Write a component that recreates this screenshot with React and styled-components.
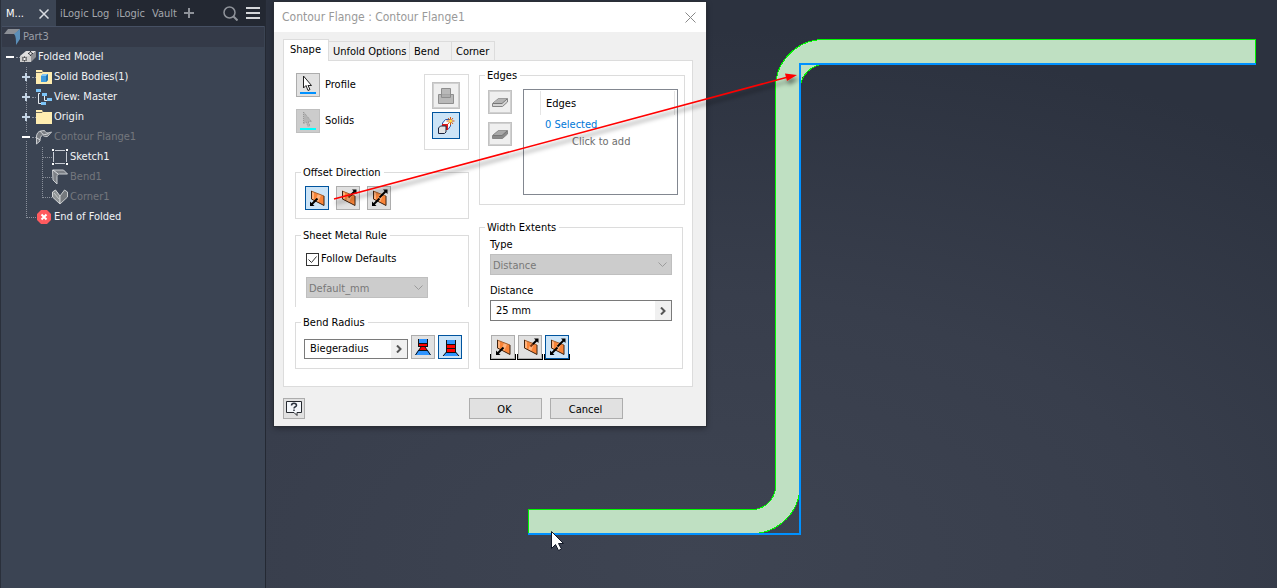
import React from "react";
import styled, { createGlobalStyle } from "styled-components";

const GlobalStyle = createGlobalStyle`
    * { box-sizing: border-box; }
    body { margin: 0; background-color: #2f3542; }
    body, button, input, select {
        font-family: Tahoma, "DejaVu Sans Condensed", "DejaVu Sans", sans-serif;
        font-size: 11px;
        line-height: 16px;
    }
`

const Page = styled.div`
    display: flex;
    position: relative;
    min-height: 100vh;
    overflow: hidden;
`

/* ---------- browser panel ---------- */

const Sidebar = styled.aside`
    width: 266px;
    flex: none;
    padding-left: 1px;
    border-right: 1px solid #242933;
    background-color: #3b4453;
    box-shadow: inset 1px 0 0 #2a303b;
`

const TabBar = styled.div`
    display: flex;
    align-items: center;
    height: 26px;
    padding-right: 5px;
    background-color: #232832;
`

const PanelTab = styled.button`
    display: flex;
    align-items: center;
    justify-content: space-between;
    align-self: stretch;
    flex: none;
    width: ${props => props.$active ? "55px" : "auto"};
    padding: ${props => props.$active ? "1px 7px 0 5px" : "1px 3px 0 4px"};
    border: 0;
    background-color: ${props => props.$active ? "#3b4453" : "transparent"};
    color: ${props => props.$active ? "#ffffff" : "#a3a7ad"};
`

const BarButton = styled.button`
    display: flex;
    padding: 0;
    margin-left: ${props => props.$left};
    border: 0;
    background: none;
`

const RootRow = styled.div`
    display: flex;
    align-items: center;
    gap: 1px;
    height: 21px;
    margin: 0 1px;
    padding-left: 2px;
    border-top: 1px solid #465063;
    background-color: #343a48;
    color: #9a9ea6;
`

const Tree = styled.ul`
    margin: 0;
    padding: 0;
    list-style: none;
`

const Branch = styled(Tree)`
    position: relative;
    padding-left: 16px;
    &::before {
        content: "";
        position: absolute;
        top: 0;
        bottom: 9px;
        left: 25px;
        border-left: 1px dotted #8a909b;
    }
`

const TreeRow = styled.div`
    display: flex;
    align-items: center;
    position: relative;
    height: 20px;
    padding-left: 5px;
    color: ${props => props.$dim ? "#74777d" : "#f2f3f5"};
`

const Toggle = styled.span`
    display: flex;
    width: 8px;
    margin-right: 6px;
    background-color: ${props => props.$blank ? "transparent" : "#3b4453"};
`

const Leader = styled.span`
    position: absolute;
    left: ${props => props.$long ? "10px" : "15px"};
    width: ${props => props.$long ? "9px" : "4px"};
    border-top: 1px dotted #8a909b;
`

const RowIcon = styled.svg`
    position: relative;
    flex: none;
    width: 16px;
    height: 16px;
    margin-right: 2px;
`

/* ---------- dialog ---------- */

const Viewport = styled.main`
    position: relative;
    flex: 1;
    background: radial-gradient(ellipse 95% 90% at 42% 95%, #3e4452 0%, #383e4c 50%, #2c323f 100%);
`

const Drawing = styled.svg`
    position: absolute;
    top: 0;
    left: 0;
    width: 100%;
    height: 100%;
`

const Dialog = styled.section`
    position: absolute;
    top: 2px;
    left: 8px;
    width: 432px;
    background-color: #f0f0f0;
    color: #000000;
    box-shadow: 0 0 0 1px #2a2e36, 0 2px 6px rgba(0, 0, 0, 0.4);
`

const TitleBar = styled.header`
    display: flex;
    align-items: center;
    justify-content: space-between;
    height: 30px;
    padding: 0 10px 0 8px;
    background-color: #ffffff;
`

const Title = styled.h1`
    margin: 0;
    color: #999999;
    font-size: 12px;
    font-weight: 400;
`

const CloseButton = styled.button`
    display: flex;
    padding: 0;
    border: 0;
    background: none;
`

const DialogBody = styled.div`
    padding: 7px 13px 7px 9px;
`

const Tabs = styled.div`
    display: flex;
    align-items: flex-end;
`

const Tab = styled.button`
    position: relative;
    width: ${props => props.$width};
    height: ${props => props.$active ? "22px" : "19px"};
    margin-bottom: ${props => props.$active ? "-1px" : "0"};
    padding: ${props => props.$active ? "0 0 1px 6px" : "1px 0 0 4px"};
    border: 1px solid #dcdcdc;
    border-bottom: 0;
    border-left-width: ${props => props.$active ? "1px" : "0"};
    background-color: ${props => props.$active ? "#ffffff" : "#f0f0f0"};
    text-align: left;
    white-space: nowrap;
    z-index: ${props => props.$active ? 1 : 0};
`

const Sheet = styled.div`
    display: flex;
    gap: 10px;
    padding: 0 7px 17px 11px;
    border: 1px solid #dcdcdc;
    background-color: #ffffff;
`

const LeftColumn = styled.div`
    width: 174px;
    padding-top: 12px;
`

const RightColumn = styled.div`
    flex: 1;
    padding-top: 7px;
`

const Group = styled.fieldset`
    min-width: 0;
    height: ${props => props.$height};
    margin: ${props => props.$top} ${props => props.$inset || "0"} 0 0;
    padding: ${props => props.$pad};
    border: 1px solid #dcdcdc;
    border-bottom-width: ${props => props.$open ? "0" : "1px"};
`

const Legend = styled.legend`
    height: 14px;
    margin-left: ${props => props.$pull || "0"};
    padding: 0 3px 0 2px;
`

const Row = styled.div`
    display: flex;
    align-items: ${props => props.$end ? "flex-end" : "flex-start"};
    gap: ${props => props.$gap || "0"};
    justify-content: ${props => props.$spread ? "space-between" : "flex-start"};
`

const Stack = styled.div`
    display: flex;
    flex-direction: column;
    gap: ${props => props.$gap || "0"};
    padding-top: ${props => props.$top || "0"};
`

const PickLabel = styled.label`
    display: flex;
    align-items: center;
    gap: 5px;
    padding-left: 1px;
`

const ModeBox = styled.div`
    display: flex;
    flex-direction: column;
    gap: 3px;
    width: 45px;
    height: 76px;
    margin-top: 1px;
    padding: 7px;
    border: 1px solid #dcdcdc;
`

const faces = {
    normal: ["#adadad", "#e1e1e1"],
    on: ["#00549e", "#cce4f7"],
    faded: ["#bfbfbf", "#cccccc"],
    flat: ["#c2c2c2", "#efefef"],
}

const IconButton = styled.button`
    display: flex;
    align-items: center;
    justify-content: center;
    flex: none;
    width: ${props => props.$wide ? "28px" : "24px"};
    height: ${props => props.$wide ? "27px" : "24px"};
    padding: 0;
    border: 1px solid ${props => faces[props.$face || "normal"][0]};
    background-color: ${props => faces[props.$face || "normal"][1]};
    box-shadow: ${props => props.$face === "flat" ? "inset 0 0 0 1px #d0d0d0" : "none"};
`

const SideButton = styled(IconButton)`
    position: relative;
    &::after {
        content: "";
        position: absolute;
        right: -2px;
        bottom: -2px;
        left: -2px;
        height: 5px;
        border: 1px solid #000000;
        border-top: 0;
    }
`

const SideRow = styled(Row)`
    margin-top: 14px;
    padding-left: 1px;
`

const CheckLabel = styled.label`
    display: flex;
    align-items: center;
    gap: 2px;
`

const CheckBox = styled.input`
    appearance: none;
    width: 13px;
    height: 13px;
    margin: 0;
    border: 1px solid #333333;
    background: #ffffff;
    &:checked {
        background: #ffffff url("data:image/svg+xml,%3Csvg xmlns='http://www.w3.org/2000/svg' viewBox='0 0 11 11'%3E%3Cpath d='M1.5 5.5l3 3 5-6' fill='none' stroke='%23333'/%3E%3C/svg%3E");
    }
`

const Select = styled.select`
    appearance: none;
    display: block;
    width: ${props => props.$width || "100%"};
    height: 21px;
    padding: 2px 20px 0 2px;
    border: 1px solid #bfbfbf;
    border-radius: 0;
    background: #cccccc url("data:image/svg+xml,%3Csvg xmlns='http://www.w3.org/2000/svg' viewBox='0 0 9 6'%3E%3Cpath d='M.5 .5l4 4 4-4' fill='none' stroke='%239b9b9b'/%3E%3C/svg%3E") no-repeat right 4px center / 9px 6px;
    color: #787878;
    opacity: 1;
`

const ValueBox = styled.div`
    display: flex;
    width: ${props => props.$width || "100%"};
    height: ${props => props.$width ? "20px" : "21px"};
    border: 1px solid #7a7a7a;
    background-color: #ffffff;
`

const ValueInput = styled.input`
    flex: 1;
    min-width: 0;
    padding: 0 0 0 5px;
    border: 0;
    background: none;
    color: #000000;
`

const ArrowButton = styled.button`
    display: flex;
    align-items: center;
    justify-content: center;
    width: 16px;
    padding: 0;
    border: 0;
    background-color: #f0f0f0;
`

const FieldLabel = styled.label`
    display: block;
    height: 14px;
    margin: ${props => props.$space || "0"} 0 3px;
`

const EdgeList = styled.div`
    width: 155px;
    height: 106px;
    padding: 1px;
    border: 1px solid #828790;
`

const EdgeHeader = styled.div`
    height: 24px;
    margin: 0 1px 0 15px;
    padding: 5px;
    border: 1px solid #e5e5e5;
    border-width: 0 1px;
`

const EdgeLink = styled.a`
    display: block;
    padding: 2px 0 1px 20px;
    color: #0078d7;
    text-decoration: none;
`

const EdgeHint = styled.p`
    margin: 0;
    padding-left: 47px;
    color: #6d6d6d;
`

const Footer = styled.footer`
    display: flex;
    align-items: center;
    gap: 8px;
    margin-top: 11px;
    padding-right: 70px;
`

const HelpButton = styled(IconButton)`
    width: 22px;
    height: 21px;
    margin-right: auto;
`

const PushButton = styled.button`
    width: 73px;
    height: 21px;
    padding: 2px 2px 0 0;
    border: 1px solid #adadad;
    background-color: #e1e1e1;
`

const Overlay = styled.svg`
    position: absolute;
    top: 0;
    left: 0;
    width: 100%;
    height: 100%;
    pointer-events: none;
`

/* ---------- icons ---------- */

const Plus = ({ size = 8, color = "#c3d3e4" }) => (
    <svg width={size} height={size} viewBox={`0 0 ${size} ${size}`}>
        <path d={`M${size / 2} 0v${size}M0 ${size / 2}h${size}`} stroke={color} strokeWidth="2" />
    </svg>
)

const Minus = () => (
    <svg width="8" height="8" viewBox="0 0 8 8"><path d="M0 4h8" stroke="#fff" strokeWidth="2" /></svg>
)

const PartIcon = () => (
    <RowIcon viewBox="0 0 16 16">
        <path d="M0 5L4 0h12l-5 5z" fill="#8b8f96" />
        <path d="M10 5l6-5v10l-4 6c0-5 0-9-2-11z" fill="#5b8fb9" />
    </RowIcon>
)

const ModelIcon = () => (
    <RowIcon viewBox="0 0 16 16">
        <path d="M0 7l6-5h10l-5 5z" fill="#e0e0e0" />
        <path d="M11 7l5-5v6l-5 5z" fill="#8f9094" />
        <path d="M0 7h11v6H0z" fill="#cdcdcd" />
        <path d="M4.500 7.500v5M2 10h5M2.500 8l4 4M6.500 8l-4 4" stroke="#26282c" />
        <circle cx="4.500" cy="10" r="1.200" fill="#f4f4f4" />
        <path d="M10.500 2v5M8 4.500h5" stroke="#26282c" />
        <circle cx="10.500" cy="4.500" r="1.500" fill="#f4f4f4" stroke="#44474d" />
    </RowIcon>
)

const FolderIcon = ({ body }) => (
    <RowIcon viewBox="0 0 16 16">
        <path d="M0 1h6l1 2h9v12H0z" fill="#ffedb0" />
        <path d="M0 3.500h6l1-1" fill="none" stroke="#6f6c5e" />
        {body && <>
            <path d="M5 7l2-2h5v6l-2 2H5z" fill="#3f9bdc" />
            <path d="M5 7l2-2h5l-2 2z" fill="#85c8f5" />
            <path d="M10 7l2-2v6l-2 2z" fill="#2272ae" />
        </>}
    </RowIcon>
)

const ViewIcon = () => (
    <RowIcon viewBox="0 0 16 16">
        <path d="M4 4.500H2.500v10H5M8.500 6v5.500H11" fill="none" stroke="#e8edf2" />
        <path d="M0 0h5v3H0zM6 4h5v3H6zM11 9h5v3h-5zM5 13h5v3H5z" fill="#7cc4f8" />
    </RowIcon>
)

const FlangeIcon = () => (
    <RowIcon viewBox="0 0 16 16">
        <path d="M.5 15V7c.5-3 2-4.500 4-5l4-.5c1 2.500 3 3 7 1.500l-4 4.500c-2.500.5-4-.5-5-1.500C4.500 7.500 4 9 4 12z" fill="#777b81" stroke="#c9ccd0" />
        <path d="M4.500 2c1 2.500 2.500 3.500 4 3.500s3-.5 4-1M1 9l3 2" fill="none" stroke="#dfe1e4" />
    </RowIcon>
)

const SketchIcon = () => (
    <RowIcon viewBox="0 0 16 16">
        <path d="M1.500 1v14M14.500 1v14M1 1.500h14M1 14.500h14" stroke="#c9ced6" />
        <path d="M0 0h3v3H0zM13 0h3v3h-3zM0 13h3v3H0zM13 13h3v3h-3z" fill="#3b4453" />
        <path d="M0 0h2v2H0zM14 0h2v2h-2zM0 14h2v2H0zM14 14h2v2h-2z" fill="#fff" />
    </RowIcon>
)

const BendIcon = () => (
    <RowIcon viewBox="0 0 16 16">
        <path d="M.5 1h11l4 4h-8C5 5 5 7 5 9v6l-4-4z" fill="#7d8187" stroke="#c9ccd0" />
        <path d="M1 1l5 4" stroke="#dfe1e4" />
    </RowIcon>
)

const CornerIcon = () => (
    <RowIcon viewBox="0 0 16 16">
        <path d="M.5 3l3-2L8 7v8L.5 8z" fill="#8f9496" stroke="#d6d8da" />
        <path d="M15.500 3l-3-2L8 7v8l7.500-7z" fill="#75797d" stroke="#c9ccce" />
        <path d="M2 4l5 6" stroke="#c4c7c9" />
    </RowIcon>
)

const EndIcon = () => (
    <RowIcon viewBox="0 0 16 16">
        <path d="M5 1h6l4 4v6l-4 4H5l-4-4V5z" fill="#ff5b5f" />
        <path d="M5.500 5.500l5 5M10.500 5.500l-5 5" stroke="#fff" strokeWidth="2" />
    </RowIcon>
)

const PickIcon = ({ faded }) => (
    <svg width="18" height="20" viewBox="0 0 18 20">
        <path d="M4.500 1v12l2.500-2.500 2 5 2-1-2-4h3.500z" fill={faded ? "#b4b4b4" : "#fff"} stroke={faded ? "#989898" : "#222"} strokeDasharray={faded ? "1 1" : "none"} />
        <path d="M1 18h16" stroke={faded ? "#00ffff" : "#0091ff"} strokeWidth="2" />
    </svg>
)

const StampIcon = () => (
    <svg width="18" height="18" viewBox="0 0 18 18">
        <path d="M1.500 7.500h15v9h-15z" fill="#b9b9b9" stroke="#8e8e8e" />
        <path d="M4.500 1.500h9v9h-9z" fill="#ababab" fillOpacity=".8" stroke="#8e8e8e" />
    </svg>
)

const NewSolidIcon = () => (
    <svg width="18" height="18" viewBox="0 0 18 18">
        <path d="M5.500 6l3-3.500h5v6.500l-2.500 3.500h-5.500z" fill="#f7fbff" stroke="#2b57a8" />
        <path d="M5 8h5v5" fill="none" stroke="#e01818" strokeWidth="2" />
        <path d="M1.500 11l2-2h5.500v6l-1.500 1.500h-6z" fill="#e4e4e4" stroke="#1b2540" />
        <path d="M13.500 0v8M9.500 4h8M11 1l5 6M16 1l-5 6" stroke="#d45a12" />
        <circle cx="13.500" cy="4" r="1.500" fill="#ffe24a" />
    </svg>
)

const SlabIcon = ({ solid }) => (
    <svg width="18" height="14" viewBox="0 0 18 14">
        <path d="M1.500 8.500l6-5h9V7l-5 4.500h-10z" fill={solid ? "#8a8a8a" : "#d2d2d2"} stroke="#858585" />
        <path d="M2 8.500l6-5h8l-5 5z" fill={solid ? "#a8a8a8" : "#b4b4b4"} />
        <path d="M2 8.500h9l5-4.500" fill="none" stroke="#777" />
    </svg>
)

/* side: which way the arrow leaves the face */
const FaceIcon = ({ side }) => (
    <svg width="22" height="22" viewBox="0 0 22 22">
        <path d="M5 4l13 5v9.500L5 12z" fill="#f98438" />
        <path d="M5 4l3 1.200v8.300L5 12zM12 7l3 1.200-3 7.300-3-1.500z" fill="#ffb27c" />
        <path d="M5 4l13 5" stroke="#a2602f" />
        <path d="M5.500 4v8l12.500 6.500V9" fill="none" stroke="#3c2210" />
        {side !== "back" && <>
            <path d="M11.500 11.500l-6 6" stroke="#000" strokeWidth="2" />
            <path d="M4 14.500V19h4.500z" fill="#000" />
        </>}
        {side !== "front" && <>
            <path d="M11.500 10.500l3-3" stroke={side === "back" ? "#7a3510" : "#000"} strokeWidth="2" />
            <path d="M14 8l4-4" stroke="#000" strokeWidth="2" />
            <path d="M15 2.500h4.500V7z" fill="#000" />
        </>}
    </svg>
)

const RadiusIcon = ({ straight }) => (
    <svg width="22" height="22" viewBox="0 0 22 22">
        {straight ? <>
            <path d="M7 4h10v4H7zM7 16h10l3 4H4z" fill="#2f95ff" />
            <path d="M7 8h10v8H7z" fill="#f00" />
            <path d="M7 8.500h10M7 12.500h10M7 16.500h10M7.500 4v12l-3.500 4M16.500 4v12l3.500 4" fill="none" stroke="#111" />
        </> : <>
            <path d="M6 3h10v4H6zM6 14h10l3 5H3z" fill="#2f95ff" />
            <path d="M6 7h10v3H6zM9 11h4l3 4H6z" fill="#f00" />
            <path d="M6 7.500h10M6 10.500h10M6 14.500h10M6.500 3v7M15.500 3v7M9 11l-5.500 8M13 11l5.500 8" fill="none" stroke="#111" />
        </>}
    </svg>
)

const HelpIcon = () => (
    <svg width="18" height="17" viewBox="0 0 18 17">
        <path d="M1.500 1.500h15v11H12v3l-3-3H1.500z" fill="#f4f7fb" stroke="#25292f" />
        <path d="M6.500 5.500c0-3 5-3 5 0 0 1.500-2.500 1-2.500 3M9 9.500v1.500" fill="none" stroke="#2c3440" strokeWidth="1.500" />
    </svg>
)

const Chevron = () => (
    <svg width="7" height="8" viewBox="0 0 7 8"><path d="M1 .5L4.500 4 1 7.500" fill="none" stroke="#555" strokeWidth="2" /></svg>
)

/* ---------- pieces ---------- */

const Node = ({ icon, label, dim, toggle, children }) => (
    <li>
        <TreeRow $dim={dim}>
            <Toggle $blank={!toggle}>
                {toggle === "plus" && <Plus />}
                {toggle === "minus" && <Minus />}
            </Toggle>
            <Leader $long={!toggle} />
            {icon}
            {label}
        </TreeRow>
        {children && <Branch>{children}</Branch>}
    </li>
)

const ModelBrowser = () => (
    <Sidebar>
        <TabBar>
            <PanelTab $active>
                M...
                <svg width="10" height="10" viewBox="0 0 10 10"><path d="M.5 .5l9 9M9.500 .5l-9 9" stroke="#d8dbe0" strokeWidth="1.500" /></svg>
            </PanelTab>
            <PanelTab>iLogic Log</PanelTab>
            <PanelTab>iLogic</PanelTab>
            <PanelTab>Vault</PanelTab>
            <BarButton $left="4px" aria-label="Add"><Plus size={10} color="#8f939a" /></BarButton>
            <BarButton $left="auto" aria-label="Search">
                <svg width="15" height="15" viewBox="0 0 15 15" fill="none" stroke="#8f939a"><circle cx="6.500" cy="6.500" r="5.500" strokeWidth="1.500" /><path d="M10.500 10.500l4 4" strokeWidth="2" /></svg>
            </BarButton>
            <BarButton $left="8px" aria-label="Menu">
                <svg width="14" height="12" viewBox="0 0 14 12"><path d="M0 1h14M0 6h14M0 11h14" stroke="#d5d7da" strokeWidth="2" /></svg>
            </BarButton>
        </TabBar>
        <RootRow><PartIcon />Part3</RootRow>
        <Tree>
            <Node icon={<ModelIcon />} label="Folded Model" toggle="minus">
                <Node icon={<FolderIcon body />} label="Solid Bodies(1)" toggle="plus" />
                <Node icon={<ViewIcon />} label="View: Master" toggle="plus" />
                <Node icon={<FolderIcon />} label="Origin" toggle="plus" />
                <Node icon={<FlangeIcon />} label="Contour Flange1" toggle="minus" dim>
                    <Node icon={<SketchIcon />} label="Sketch1" />
                    <Node icon={<BendIcon />} label="Bend1" dim />
                    <Node icon={<CornerIcon />} label="Corner1" dim />
                </Node>
                <Node icon={<EndIcon />} label="End of Folded" />
            </Node>
        </Tree>
    </Sidebar>
)

const FlangeDialog = () => (
    <Dialog>
        <TitleBar>
            <Title>Contour Flange : Contour Flange1</Title>
            <CloseButton aria-label="Close">
                <svg width="11" height="11" viewBox="0 0 11 11"><path d="M.5 .5l10 10M10.500 .5l-10 10" stroke="#888" /></svg>
            </CloseButton>
        </TitleBar>
        <DialogBody>
            <Tabs>
                <Tab $active $width="46px">Shape</Tab>
                <Tab $width="81px">Unfold Options</Tab>
                <Tab $width="42px">Bend</Tab>
                <Tab $width="43px">Corner</Tab>
            </Tabs>
            <Sheet>
                <LeftColumn>
                    <Row $spread>
                        <Stack $gap="12px">
                            <PickLabel><IconButton><PickIcon /></IconButton>Profile</PickLabel>
                            <PickLabel><IconButton $face="faded"><PickIcon faded /></IconButton>Solids</PickLabel>
                        </Stack>
                        <ModeBox>
                            <IconButton $wide $face="flat" aria-label="Join"><StampIcon /></IconButton>
                            <IconButton $wide $face="on" aria-label="New solid"><NewSolidIcon /></IconButton>
                        </ModeBox>
                    </Row>
                    <Group $height="54px" $top="15px" $pad="7px 9px">
                        <Legend $pull="-4px">Offset Direction</Legend>
                        <Row $gap="7px">
                            <IconButton $face="on" aria-label="Front"><FaceIcon side="front" /></IconButton>
                            <IconButton aria-label="Back"><FaceIcon side="back" /></IconButton>
                            <IconButton aria-label="Both"><FaceIcon side="both" /></IconButton>
                        </Row>
                    </Group>
                    <Group $height="79px" $top="9px" $pad="9px 10px 0" $open>
                        <Legend $pull="-5px">Sheet Metal Rule</Legend>
                        <Stack $gap="10px">
                            <CheckLabel><CheckBox type="checkbox" defaultChecked />Follow Defaults</CheckLabel>
                            <Select $width="122px" disabled aria-label="Sheet Metal Rule"><option>Default_mm</option></Select>
                        </Stack>
                    </Group>
                    <Group $height="54px" $top="8px" $pad="6px 6px 0 8px">
                        <Legend $pull="-3px">Bend Radius</Legend>
                        <Row $gap="3px" $end>
                            <ValueBox $width="104px">
                                <ValueInput aria-label="Bend Radius" defaultValue="Biegeradius" />
                                <ArrowButton aria-label="More"><Chevron /></ArrowButton>
                            </ValueBox>
                            <IconButton aria-label="Tapered"><RadiusIcon /></IconButton>
                            <IconButton $face="on" aria-label="Straight"><RadiusIcon straight /></IconButton>
                        </Row>
                    </Group>
                </LeftColumn>
                <RightColumn>
                    <Group $height="137px" $top="0" $pad="7px 6px 0 8px">
                        <Legend $pull="-3px">Edges</Legend>
                        <Row $spread>
                            <Stack $gap="8px" $top="1px">
                                <IconButton $face="flat" aria-label="Edge"><SlabIcon /></IconButton>
                                <IconButton $face="flat" aria-label="Loop"><SlabIcon solid /></IconButton>
                            </Stack>
                            <EdgeList>
                                <EdgeHeader>Edges</EdgeHeader>
                                <EdgeLink href="#edges">0 Selected</EdgeLink>
                                <EdgeHint>Click to add</EdgeHint>
                            </EdgeList>
                        </Row>
                    </Group>
                    <Group $height="149px" $top="15px" $inset="2px" $pad="3px 10px 0">
                        <Legend $pull="-5px">Width Extents</Legend>
                        <FieldLabel htmlFor="type">Type</FieldLabel>
                        <Select id="type" disabled><option>Distance</option></Select>
                        <FieldLabel htmlFor="distance" $space="8px">Distance</FieldLabel>
                        <ValueBox>
                            <ValueInput id="distance" defaultValue="25 mm" />
                            <ArrowButton aria-label="More"><Chevron /></ArrowButton>
                        </ValueBox>
                        <SideRow $gap="3px">
                            <SideButton aria-label="Front"><FaceIcon side="front" /></SideButton>
                            <SideButton aria-label="Back"><FaceIcon side="back" /></SideButton>
                            <SideButton $face="on" aria-label="Both"><FaceIcon side="both" /></SideButton>
                        </SideRow>
                    </Group>
                </RightColumn>
            </Sheet>
            <Footer>
                <HelpButton aria-label="Help"><HelpIcon /></HelpButton>
                <PushButton>OK</PushButton>
                <PushButton>Cancel</PushButton>
            </Footer>
        </DialogBody>
    </Dialog>
)

const App = () => (
    <Page>
        <GlobalStyle />
        <ModelBrowser />
        <Viewport>
            <Drawing aria-hidden="true">
                <g transform="translate(-266 0)" shapeRendering="crispEdges">
                    <path d="M1256 39H824A49 49 0 0 0 775 88V486A23 23 0 0 1 752 509H528V534H752A48 48 0 0 0 800 486V88A24 24 0 0 1 824 64H1256Z" fill="#bfe0c2" />
                    <path d="M1255.500 64V39.500H824A48.500 48.500 0 0 0 775.500 88V486A23.500 23.500 0 0 1 752 509.500H528.500V534M752 533.500A48 48 0 0 0 800 486M800.500 88A24 24 0 0 1 824 64.500" fill="none" stroke="#00f800" />
                    <path d="M528 534H800V64H1256" fill="none" stroke="#0091ff" strokeWidth="2" />
                </g>
            </Drawing>
            <FlangeDialog />
        </Viewport>
        <Overlay aria-hidden="true">
            <defs>
                <filter id="soft" x="-10%" y="-10%" width="120%" height="130%">
                    <feDropShadow dx="2" dy="4" stdDeviation="2" floodColor="#000" floodOpacity=".5" />
                </filter>
            </defs>
            <g filter="url(#soft)">
                <path d="M334 199L788 77" stroke="#f00" strokeWidth="1.500" />
                <path d="M797 75l-12-1.500 2 7.500z" fill="#f00" />
            </g>
            <path d="M551.500 531.500v17l4-4 3 6 3-1.500-3-5.500h5z" fill="#fff" stroke="#111827" />
        </Overlay>
    </Page>
)

export default App;
